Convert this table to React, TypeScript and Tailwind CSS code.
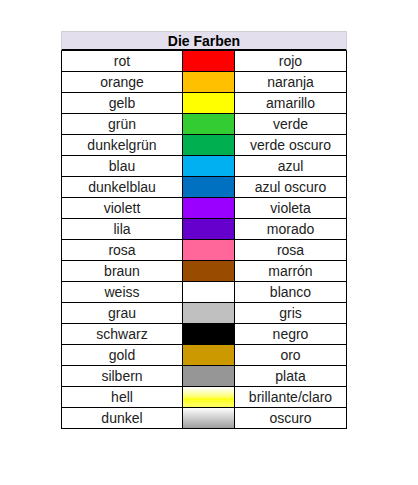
const ROWS: { de: string; es: string; swatch: string }[] = [
  { de: "rot", es: "rojo", swatch: "bg-[#ff0000]" },
  { de: "orange", es: "naranja", swatch: "bg-[#ffc000]" },
  { de: "gelb", es: "amarillo", swatch: "bg-[#ffff00]" },
  { de: "grün", es: "verde", swatch: "bg-[#33cc33]" },
  { de: "dunkelgrün", es: "verde oscuro", swatch: "bg-[#00b050]" },
  { de: "blau", es: "azul", swatch: "bg-[#00b0f0]" },
  { de: "dunkelblau", es: "azul oscuro", swatch: "bg-[#0070c0]" },
  { de: "violett", es: "violeta", swatch: "bg-[#9900ff]" },
  { de: "lila", es: "morado", swatch: "bg-[#6600cc]" },
  { de: "rosa", es: "rosa", swatch: "bg-[#ff6699]" },
  { de: "braun", es: "marrón", swatch: "bg-[#994c00]" },
  { de: "weiss", es: "blanco", swatch: "bg-white" },
  { de: "grau", es: "gris", swatch: "bg-[#c0c0c0]" },
  { de: "schwarz", es: "negro", swatch: "bg-black" },
  { de: "gold", es: "oro", swatch: "bg-[#cc9900]" },
  { de: "silbern", es: "plata", swatch: "bg-[#969696]" },
  { de: "hell", es: "brillante/claro", swatch: "bg-gradient-to-b from-white via-[#ffff00] via-60% to-[#ffff66]" },
  { de: "dunkel", es: "oscuro", swatch: "bg-gradient-to-b from-white to-[#a0a0a0]" },
];

export default function App() {
  return (
    <div className="min-h-[485px] w-[418px] bg-white pl-[61px] pt-[31px] font-['Liberation_Sans',Arial,sans-serif] text-[14px] text-[#222]">
      <div className="w-[286px]">
        <div className="flex h-[20px] items-center justify-center border-l border-t border-r border-[#d0d0d0] border-b-2 border-b-black bg-[#e4dfec] text-[14px] font-bold leading-none text-black">
          Die Farben
        </div>
        {ROWS.map((r) => (
          <div key={r.de} className="flex h-[21px] border-b border-l border-r border-black">
            <div className="flex w-[120px] items-center justify-center leading-none">{r.de}</div>
            <div className={`w-[53px] border-l border-r border-black ${r.swatch}`} />
            <div className="flex flex-1 items-center justify-center leading-none">{r.es}</div>
          </div>
        ))}
      </div>
    </div>
  );
}
